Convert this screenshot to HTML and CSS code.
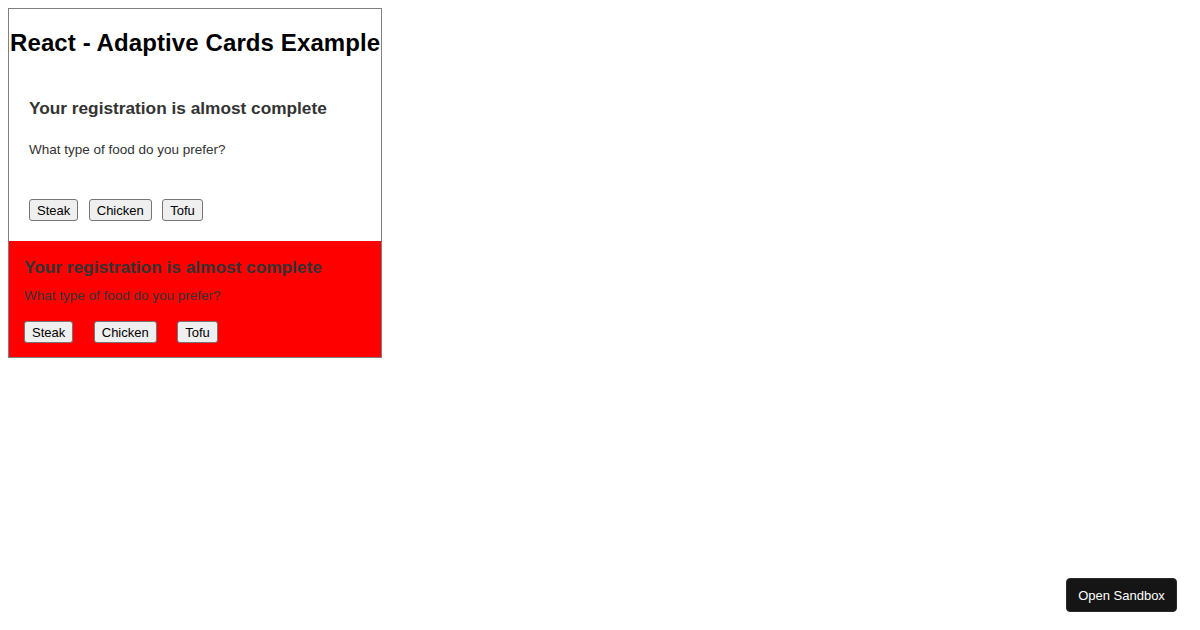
FILE: index.html
```html
<!DOCTYPE html>
<html>
<head>
<meta charset="utf-8">
<link rel="stylesheet" href="styles.css">
</head>
<body>
<div class="app">
  <h1 class="title">React - Adaptive Cards Example</h1>
  <div class="card card-default">
    <div class="card-heading">Your registration is almost complete</div>
    <div class="card-text">What type of food do you prefer?</div>
    <div class="actions actions-default">
      <button class="btn">Steak</button>
      <button class="btn">Chicken</button>
      <button class="btn">Tofu</button>
    </div>
  </div>
  <div class="card card-red">
    <div class="card-heading">Your registration is almost complete</div>
    <div class="card-text">What type of food do you prefer?</div>
    <div class="actions actions-red">
      <button class="btn">Steak</button>
      <button class="btn">Chicken</button>
      <button class="btn">Tofu</button>
    </div>
  </div>
</div>
<button class="sandbox-btn">Open Sandbox</button>
</body>
</html>
```
FILE: styles.css
```css
body {
  margin: 8px;
  font-family: "Liberation Sans", Arial, sans-serif;
  background: #fff;
}
.app {
  display: inline-block;
  border: 1px solid #808080;
}
.title {
  margin: 20px 0 20px;
  padding: 0 1px;
  font-size: 24px;
  font-weight: bold;
  color: #000;
  line-height: 28px;
  letter-spacing: 0.1px;
}
.card {
  color: #333;
}
.card-default {
  padding: 20px 20px 20px;
}
.card-red {
  background: #ff0000;
  padding: 15px 15px 14px;
}
.card-heading {
  font-size: 17.25px;
  font-weight: bold;
  line-height: 22px;
}
.card-text {
  font-size: 13.5px;
  line-height: 18px;
}
.card-default .card-text {
  margin-top: 22px;
}
.card-red .card-text {
  margin-top: 9px;
}
.actions {
  display: flex;
}
.actions-default {
  margin-top: 40px;
  gap: 10.5px;
}
.actions-red {
  margin-top: 16px;
  gap: 20.5px;
}
.btn {
  font-family: "Liberation Sans", Arial, sans-serif;
  font-size: 13px;
  height: 22px;
  padding: 1px 7px;
  background: #efefef;
  border: 1px solid #767676;
  border-radius: 3px;
  color: #000;
}
.sandbox-btn {
  position: fixed;
  right: 23px;
  bottom: 18px;
  width: 111px;
  height: 34px;
  background: #151515;
  color: #fff;
  border: 1px solid #2a2a2a;
  border-radius: 4px;
  font-family: "Liberation Sans", Arial, sans-serif;
  font-size: 13px;
}
```
